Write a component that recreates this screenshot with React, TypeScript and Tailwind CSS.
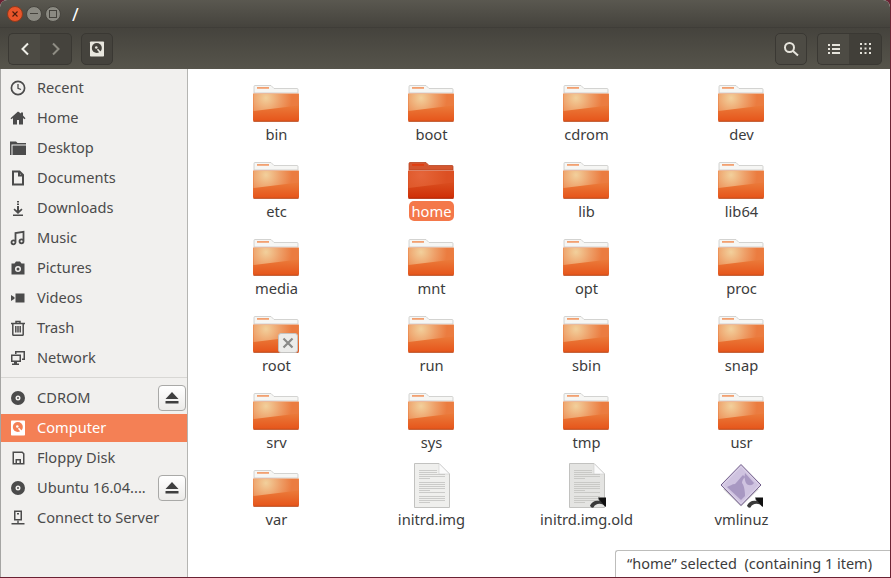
import { useId } from "react"

const font = "font-['Noto_Sans',sans-serif]"

function Icon(props: { name: string }) {
    const { name } = props
    const c = "currentColor"
    const icons: any = {
        recent: <g fill="none" stroke={c}><circle cx="8" cy="8" r="6.6" strokeWidth="1.7" /><path d="M8 4v4.3l-3 1.2" strokeWidth="1.3" transform="matrix(-1 0 0 1 16 0)" /></g>,
        home: <path fill={c} d="M8 1.5 0.5 8.2l1 1L3 8v6.5h4V10h2v4.5h4V8l1.5 1.2 1-1L13 5.400V2.500h-2v1.100z" />,
        desktop: <g fill={c}><path d="M0 1.500h6l1.500 1.500H16v1.500H1.500V15H0z" /><path d="M2.500 5.500H16V15H2.500z" /></g>,
        documents: <path fill="none" stroke={c} strokeWidth="2" d="M3 1.500h6.500l3.500 3.500v9.500H3zM9 1.500v4h4" />,
        downloads: <path fill={c} d="M7 0h2v1.500H7zM7 2.500h2V4H7zM7 5h2v4.500l2.500-2 1 1.200L8 13 3.500 8.700l1-1.200L7 9.500zM3 13.500h10V15H3z" transform="translate(0 1)" />,
        music: <path fill="none" stroke={c} strokeWidth="1.800" d="M5.500 12V3l8-1.200V11M1.500 12.300a2 2 0 1 0 4 0 2 2 0 1 0-4 0zM9.500 11.300a2 2 0 1 0 4 0 2 2 0 1 0-4 0z" />,
        pictures: <g><path fill={c} fillRule="evenodd" d="M1.500 3.500h3L6 1.500h4l1.500 2h3v11h-13zM8 6a3 3 0 1 0 0 6 3 3 0 0 0 0-6z" /><circle cx="8" cy="9" r="1.500" fill={c} /></g>,
        videos: <g fill={c}><path d="M5.500 3.500h9v9h-9z" /><path d="M1 5v6l3.500-2.200V7.200z" /></g>,
        trash: <path fill="none" stroke={c} strokeWidth="1.500" d="M1 3.500h14M6 3.500V1.500h4v2M2.800 3.500V14.500a.8.8 0 0 0 .8.8h8.800a.8.8 0 0 0 .8-.8V3.500M5.800 6v6.500M8 6v6.500M10.200 6v6.500" />,
        network: <g fill={c}><path fillRule="evenodd" d="M5 1h10v9h-3V8.500h1.500v-6h-7V4H5z" /><path fillRule="evenodd" d="M1 4.500h10v7.500H7v1.500h2V15H2v-1.500h2V12H1zM2.500 6v4.500h7V6z" /></g>,
        cdrom: <path fill={c} fillRule="evenodd" d="M8 1a7 7 0 1 0 0 14A7 7 0 0 0 8 1zm0 4.500a2.500 2.500 0 1 1 0 5 2.500 2.500 0 0 1 0-5zM8 7a1 1 0 1 0 0 2 1 1 0 0 0 0-2z" />,
        computer: <Disk inner="#f48055" />,
        floppy: <path fill={c} fillRule="evenodd" d="M2.500 1.500h10l2 2v11h-12zM4 3v10h1.500V9H11v4h2V4l-1-1zM7 10.500V13h2.500v-2.500z" />,
        server: <g fill={c}><path fillRule="evenodd" d="M4 0.500h8V10.500H4zM5.500 2v7h5V2z" /><path d="M7 3h2v1.500H7zM7.300 10.500h1.400V13h-1.400zM1.500 13h13v1.500h-13z" /></g>,
    }
    return <svg width="16" height="16" viewBox="0 0 16 16" className="shrink-0">{icons[name]}</svg>
}

// hard disk: light card, round platter, little read arm
function Disk(props: { inner: string }) {
    return (
        <g>
            <rect x="1" y="0.500" width="14" height="15" rx="0.800" fill="currentColor" />
            <circle cx="7.800" cy="7" r="5" fill={props.inner} />
            <circle cx="7.300" cy="6.500" r="1.300" fill="currentColor" />
            <path d="M8.500 8.200 12.500 12.800" stroke="currentColor" strokeWidth="1.600" />
        </g>
    )
}

function Folder(props: { selected?: boolean }) {
    const id = useId()
    const { selected } = props
    return (
        <svg width="48" height="40" viewBox="1 0 48 40">
            <defs>
                <linearGradient id={id + "b"} x1="0" y1="0" x2="0" y2="1">
                    <stop offset="0" stopColor={selected ? "#d9532a" : "#ec8a50"} />
                    <stop offset="0.5" stopColor={selected ? "#d84a1c" : "#ea7636"} />
                    <stop offset="1" stopColor={selected ? "#cf2d05" : "#e6541a"} />
                </linearGradient>
                <radialGradient id={id + "g"} gradientUnits="userSpaceOnUse" cx="14" cy="15" r="26">
                    <stop offset="0" stopColor={selected ? "#e5653a" : "#f2d09c"} />
                    <stop offset="0.55" stopColor={selected ? "#e05a2c" : "#ee9f68"} />
                    <stop offset="1" stopColor={selected ? "#dc5023" : "#eb7c40"} />
                </radialGradient>
            </defs>
            <path d="M2 10V3.500a1 1 0 0 1 1-1h16l3 3h23a1 1 0 0 1 1 1V10z" fill={selected ? "#d4562f" : "#f6f6f4"} stroke={selected ? "#b8431f" : "#c9c9c6"} strokeWidth="0.800" />
            <rect x="5" y="4" width="12" height="1.800" fill={selected ? "#e13d10" : "#f2a070"} />
            <path d="M1 10.500h46V37a1.500 1.500 0 0 1-1.500 1.500H2.500A1.500 1.500 0 0 1 1 37z" fill={`url(#${id}b)`} />
            <path d="M1.500 11h45v11.500L1.500 28z" fill={`url(#${id}g)`} />
            <path d="M1.500 38.300h45" stroke={selected ? "#a82200" : "#b4481e"} strokeWidth="0.900" />
        </svg>
    )
}

function LinkArrow() {
    return (
        <svg width="16" height="12" viewBox="0 0 16 12" className="absolute right-[-1px] bottom-[0px]">
            <path d="M0 9.500C2 5.500 5.500 4 9.500 5L8 2.500h7.500V11L13 8.500C9 7 5 8 3.500 11.500 1.500 12 .5 11 0 9.500z" fill="#3a3a3a" />
            <path d="M8 1.500h8V11l-3-3-2.500-3z" fill="#111111" />
        </svg>
    )
}

function Doc(props: { old?: boolean }) {
    const lines = [7, 9, 11, 13, 15, 19, 21, 23, 25, 27, 29, 33, 35, 37, 39]
    return (
        <div className="relative">
            <svg width="36" height="45" viewBox="0 0 36 45" className="block">
                <path d="M.5.500H25L35.500 11V44.500H.5z" fill={props.old ? "#e4e4e2" : "#efefed"} stroke="#c2c2c0" />
                <path d="M25 .5V11H35.500z" fill="#fbfbfb" stroke="#cfcfcd" strokeWidth="0.600" />
                {lines.map((y, i) => <rect key={y} x="5" y={y} width={i % 5 == 4 ? 11 : i < 2 ? 18 : 26} height="0.800" fill="#c2c2c0" />)}
            </svg>
            {props.old && <LinkArrow />}
        </div>
    )
}

function Kernel() {
    return (
        <div className="relative mr-[2px]">
            <svg width="42" height="44" viewBox="0 0 42 44" className="block">
                <path d="M21 42.500 3 25h36z" fill="#8a8a8a" opacity="0.350" />
                <path d="M21 .5 41 21 21 41.500 1 21z" fill="#d8cde6" stroke="#6f5c88" />
                <path d="M21 3.500 38 21 21 38.500 4 21z" fill="#cfc3e0" />
                <path d="M7 23c3-1 5-3 8-3 3-3 5-6 8-9l2 2c-2 2-3 4-3 6 2 2 3 8 3 13l-4 4zM25 9l9 10c-2 3-6 3-8 0-1-2-2-6-1-10z" fill="#a898c2" />
            </svg>
            <LinkArrow />
        </div>
    )
}

function Item(props: { label: string, kind?: string, selected?: boolean, emblem?: boolean }) {
    const { label, kind, selected, emblem } = props
    return (
        <div className="flex flex-col items-center h-[77px]">
            <div className="relative h-10 flex items-end justify-center">
                {kind == "doc" ? <Doc /> : kind == "old" ? <Doc old /> : kind == "kernel" ? <Kernel /> : <Folder selected={selected} />}
                {emblem && (
                    <div className="absolute left-[25px] top-[19px] w-5 h-5 rounded-[3px] bg-[#ececea] border border-[#c4c4c2] flex items-center justify-center">
                        <svg width="12" height="12" viewBox="0 0 12 12"><path d="M1.500 1.500l9 9M10.500 1.500l-9 9" stroke="#8a8a88" strokeWidth="2.200" /></svg>
                    </div>
                )}
            </div>
            <span className={selected ? "mt-[1px] h-5 leading-5 px-[3px] rounded-[5px] bg-[#f4784a] text-white text-[14.700px]" : "mt-[1px] h-5 leading-5 text-[14.700px] text-[#3c3c3c]"}>{label}</span>
        </div>
    )
}

function Row(props: { icon: string, label: string, active?: boolean, eject?: boolean }) {
    const { icon, label, active, eject } = props
    return (
        <div className={active ? "flex items-center h-7 mb-[2px] pl-[9px] bg-[#f48055] text-white" : "flex items-center h-7 mb-[2px] pl-[9px] text-[#4b4b4b]"}>
            <Icon name={icon} />
            <span className="ml-[11px] text-[14.600px] flex-1">{label}</span>
            {eject && (
                <button className="w-7 h-[26px] mr-[1px] rounded-[4px] border border-[#a9a9a7] bg-gradient-to-b from-white to-[#ecebe9] flex items-center justify-center">
                    <svg width="14" height="12" viewBox="0 0 14 12"><path d="M7 0l6.500 7H.5zM.5 9h13v2.500H.5z" fill="#3f3f3f" /></svg>
                </button>
            )}
        </div>
    )
}

function ToolButton(props: { className: string, children: any }) {
    return <div className={"h-8 flex items-center justify-center border border-[#3a3833] text-[#e6e4dc] " + props.className}>{props.children}</div>
}

export default function App() {
    const places = [["recent", "Recent"], ["home", "Home"], ["desktop", "Desktop"], ["documents", "Documents"], ["downloads", "Downloads"], ["music", "Music"], ["pictures", "Pictures"], ["videos", "Videos"], ["trash", "Trash"], ["network", "Network"]]
    const items = ["bin", "boot", "cdrom", "dev", "etc", "home", "lib", "lib64", "media", "mnt", "opt", "proc", "root", "run", "sbin", "snap", "srv", "sys", "tmp", "usr", "var"]

    return (
        <div className={"w-[891px] h-[578px] overflow-hidden bg-[#6b2233] " + font}>
            <div className="w-[890px] h-[577px] rounded-t-[7px] overflow-hidden flex flex-col bg-white relative">
                <div className="h-[28px] shrink-0 flex items-center bg-gradient-to-b from-[#5a5850] to-[#45433d] border-b border-[#3f3d38]">
                    <div className="ml-[7px] w-4 h-4 rounded-full bg-[#e9552a] border border-[#8f3a1c] flex items-center justify-center">
                        <svg width="8" height="8" viewBox="0 0 8 8"><path d="M1.500 1.500l5 5M6.500 1.500l-5 5" stroke="#4a1c0c" strokeWidth="1.100" /></svg>
                    </div>
                    <div className="ml-[3px] w-4 h-4 rounded-full bg-[#8b8a82] border border-[#45433d] flex items-center justify-center">
                        <div className="w-2 h-[1.500px] bg-[#45433d]" />
                    </div>
                    <div className="ml-[3px] w-4 h-4 rounded-full bg-[#8b8a82] border border-[#45433d] flex items-center justify-center">
                        <div className="w-2 h-2 border border-[#45433d]" />
                    </div>
                    <span className="ml-[11px] text-white text-[18px] leading-none">/</span>
                </div>
                <div className="h-[41px] shrink-0 flex items-center px-[8px] bg-gradient-to-b from-[#45433d] to-[#56544b]">
                    <ToolButton className="w-8 rounded-l-[5px] bg-[#4d4b44] border-r-0">
                        <svg width="10" height="14" viewBox="0 0 10 14"><path d="M8 1.500 2.500 7 8 12.500" fill="none" stroke="#efefe8" strokeWidth="2" /></svg>
                    </ToolButton>
                    <ToolButton className="w-8 rounded-r-[5px] bg-[#45433d] border-l-0">
                        <svg width="10" height="14" viewBox="0 0 10 14"><path d="M2 1.500 7.500 7 2 12.500" fill="none" stroke="#8f8d84" strokeWidth="2" /></svg>
                    </ToolButton>
                    <ToolButton className="w-8 ml-[9px] rounded-[5px] bg-[#45433d]">
                        <svg width="16" height="16" viewBox="0 0 16 16" className="text-[#e8e6de]"><Disk inner="#45433d" /></svg>
                    </ToolButton>
                    <div className="flex-1" />
                    <ToolButton className="w-8 rounded-[5px] bg-[#4d4b44]">
                        <svg width="16" height="16" viewBox="0 0 16 16"><circle cx="6.500" cy="6.500" r="4.500" fill="none" stroke="#e6e4dc" strokeWidth="2" /><path d="M10 10l5 4.500" stroke="#e6e4dc" strokeWidth="2" /></svg>
                    </ToolButton>
                    <ToolButton className="w-8 ml-[10px] rounded-l-[5px] bg-[#4d4b44] border-r-0">
                        <svg width="12" height="10" viewBox="0 0 12 10" fill="#e6e4dc"><path d="M0 0h2v2H0zM4 0h8v2H4zM0 4h2v2H0zM4 4h8v2H4zM0 8h2v2H0zM4 8h8v2H4z" /></svg>
                    </ToolButton>
                    <ToolButton className="w-[33px] rounded-r-[5px] bg-[#413f39] border-l-0">
                        <svg width="11" height="11" viewBox="0 0 11 11" fill="#e6e4dc"><path d="M0 0h2v2H0zM4.500 0h2v2h-2zM9 0h2v2H9zM0 4.500h2v2H0zM4.500 4.500h2v2h-2zM9 4.500h2v2H9zM0 9h2v2H0zM4.500 9h2v2h-2zM9 9h2v2H9z" /></svg>
                    </ToolButton>
                </div>
                <div className="flex-1 flex min-h-0">
                    <div className="w-[188px] shrink-0 bg-[#f1f0ee] border-l border-[#a5a5a3] border-r-[1px] border-r-[#b5b5b2] pt-[5px]">
                        {places.map(([icon, label]) => <Row key={label} icon={icon} label={label} />)}
                        <div className="h-px bg-[#d8d7d4] mt-[5px] mb-[6px]" />
                        <Row icon="cdrom" label="CDROM" eject />
                        <Row icon="computer" label="Computer" active />
                        <Row icon="floppy" label="Floppy Disk" />
                        <Row icon="cdrom" label="Ubuntu 16.04...." eject />
                        <Row icon="server" label="Connect to Server" />
                    </div>
                    <div className="flex-1 pt-[14px] pl-[11px]">
                        <div className="grid grid-cols-[repeat(4,155px)]">
                            {items.map((name) => <Item key={name} label={name} selected={name == "home"} emblem={name == "root"} />)}
                            <Item label="initrd.img" kind="doc" />
                            <Item label="initrd.img.old" kind="old" />
                            <Item label="vmlinuz" kind="kernel" />
                        </div>
                    </div>
                </div>
                <div className="absolute right-0 bottom-0 w-[275px] h-[27px] bg-white border-t border-l border-[#bdbdbb] rounded-tl-[3px] flex items-center pl-[11px] text-[14.500px] text-[#3c3c3c] whitespace-pre">“home” selected  (containing 1 item)</div>
            </div>
        </div>
    )
}
